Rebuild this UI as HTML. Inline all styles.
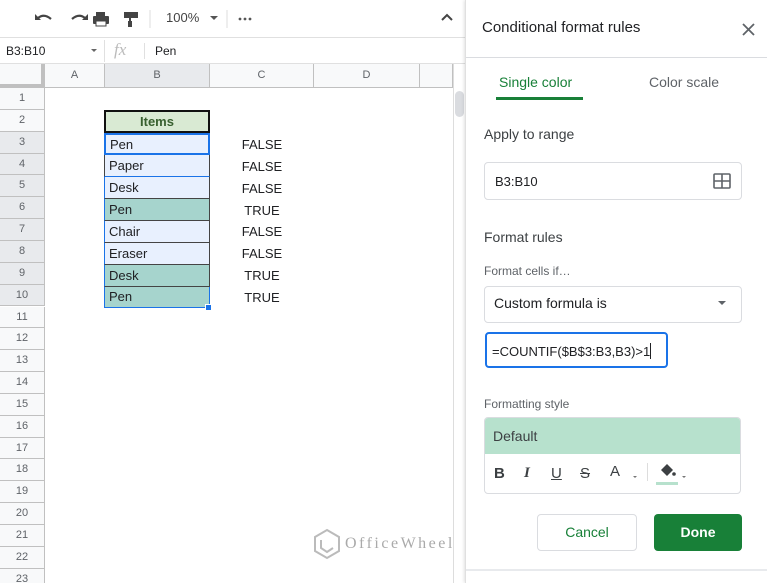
<!DOCTYPE html>
<html><head><style>
*{margin:0;padding:0;box-sizing:border-box}
html,body{width:767px;height:583px;overflow:hidden}
body{background:#fff;font-family:"Liberation Sans",Arial,sans-serif;position:relative;color:#202124}
.a{position:absolute}
.rn{position:absolute;left:0;width:45px;background:#f8f9fa;border-bottom:1px solid #c0c0c0;border-right:1px solid #c0c0c0;text-align:center;font-size:11px;color:#5f6368}
.ch{position:absolute;top:64px;height:24px;background:#f8f9fa;border-right:1px solid #c0c0c0;border-bottom:1px solid #c0c0c0;text-align:center;font-size:11px;color:#5f6368;line-height:23px}
.cell{position:absolute;left:104px;width:106px;font-size:13px;padding-left:4px;border:1px solid #444;border-top:none}
.tf{position:absolute;left:210px;width:104px;text-align:center;font-size:13px}
.lbl{position:absolute;font-size:14px;color:#3c4043}
.box{position:absolute;border:1px solid #dadce0;border-radius:4px;background:#fff}
</style></head><body>
<!-- toolbar -->
<div class="a" style="left:0;top:0;width:466px;height:38px;border-bottom:1px solid #e0e0e0"></div>
<svg class="a" style="left:30px;top:8px" width="260" height="22" viewBox="0 0 260 22">
<g fill="none" stroke="#444" stroke-width="2.2">
<path d="M8 10 Q14 5 21 11"/><path d="M42 11 Q49 5 55 10"/></g>
<path d="M5 6v6h6z" fill="#444"/><path d="M58 6v6h-6z" fill="#444"/>
<rect x="66" y="4" width="9" height="4" fill="#444"/><rect x="63" y="8" width="16" height="8" rx="1" fill="#444"/><rect x="66" y="13" width="10" height="5" fill="#fff" stroke="#444"/>
<rect x="94" y="4" width="14" height="6" fill="#444"/><rect x="99" y="10" width="2" height="3" fill="#444"/><rect x="98" y="13" width="4" height="6" fill="#444"/>
<line x1="120" y1="2" x2="120" y2="20" stroke="#ddd"/>
<path d="M180 8h8l-4 4z" fill="#555"/>
<line x1="197" y1="2" x2="197" y2="20" stroke="#ddd"/>
<circle cx="210" cy="11" r="1.4" fill="#555"/><circle cx="215" cy="11" r="1.4" fill="#555"/><circle cx="220" cy="11" r="1.4" fill="#555"/>
</svg>
<div class="a" style="left:166px;top:10px;font-size:13px;color:#444">100%</div>
<svg class="a" style="left:440px;top:12px" width="14" height="10"><path d="M2 8l5-5 5 5" fill="none" stroke="#444" stroke-width="2"/></svg>
<!-- formula bar -->
<div class="a" style="left:0;top:38px;width:466px;height:26px;border-bottom:1px solid #e0e0e0"></div>
<div class="a" style="left:6px;top:44px;font-size:12px">B3:B10</div>
<div class="a" style="left:91px;top:49px;border:3px solid transparent;border-top:3px solid #666"></div>
<div class="a" style="left:104px;top:40px;width:1px;height:22px;background:#e0e0e0"></div>
<div class="a" style="left:114px;top:40px;font-size:17px;font-style:italic;color:#bbb;font-family:'Liberation Serif',serif">fx</div>
<div class="a" style="left:144px;top:43px;width:1px;height:16px;background:#e0e0e0"></div>
<div class="a" style="left:155px;top:44px;font-size:12px">Pen</div>
<!-- headers -->
<div class="a" style="left:0;top:64px;width:45px;height:24px;background:#f8f9fa;border-right:4px solid #c0c0c0;border-bottom:4px solid #c0c0c0"></div>
<div class="ch" style="left:45px;width:60px">A</div>
<div class="ch" style="left:105px;width:105px;background:#e8eaed">B</div>
<div class="ch" style="left:210px;width:104px">C</div>
<div class="ch" style="left:314px;width:106px">D</div>
<div class="ch" style="left:420px;width:33px"></div>
<div class="a" style="left:453px;top:64px;width:13px;height:519px;background:#fff;border-left:1px solid #ddd"></div>
<div class="a" style="left:455px;top:91px;width:9px;height:26px;background:#dadce0;border-radius:5px"></div>
<div id="rows"></div>
<script>
var h='';for(var i=1;i<=23;i++){var t=88+(i-1)*21.85;h+='<div class="rn" style="top:'+t+'px;height:21.85px;line-height:21px;'+(i>=3&&i<=10?'background:#e8eaed;':'')+'">'+i+'</div>';}
document.getElementById('rows').innerHTML=h;
</script>
<div class="a" style="left:104px;top:110px;width:106px;height:23px;background:#d9ead3;border:2px solid #111;text-align:center;font-size:13px;font-weight:bold;color:#38602f;line-height:19px">Items</div>
<div class="cell" style="top:133px;height:22px;line-height:19px;background:#e8f0fe;border:2px solid #1a73e8">Pen</div>
<div class="cell" style="top:155px;height:22px;line-height:21px;background:#e8f0fe;border-color:#1a73e8 #444">Paper</div>
<div class="cell" style="top:177px;height:22px;line-height:21px;background:#e8f0fe;border-left-color:#1a73e8">Desk</div>
<div class="cell" style="top:199px;height:22px;line-height:21px;background:#a6d4cd;border-left-color:#1a73e8">Pen</div>
<div class="cell" style="top:221px;height:22px;line-height:21px;background:#e8f0fe;border-left-color:#1a73e8">Chair</div>
<div class="cell" style="top:243px;height:22px;line-height:21px;background:#e8f0fe;border-left-color:#1a73e8">Eraser</div>
<div class="cell" style="top:265px;height:22px;line-height:21px;background:#a6d4cd;border-left-color:#1a73e8">Desk</div>
<div class="cell" style="top:287px;height:21px;line-height:20px;background:#a6d4cd;border-color:#1a73e8">Pen</div>
<div class="a" style="left:205px;top:304px;width:7px;height:7px;background:#1a73e8;border:1px solid #fff"></div>
<div class="tf" style="top:137px">FALSE</div>
<div class="tf" style="top:159px">FALSE</div>
<div class="tf" style="top:181px">FALSE</div>
<div class="tf" style="top:203px">TRUE</div>
<div class="tf" style="top:224px">FALSE</div>
<div class="tf" style="top:246px">FALSE</div>
<div class="tf" style="top:268px">TRUE</div>
<div class="tf" style="top:290px">TRUE</div>
<!-- watermark -->
<svg class="a" style="left:312px;top:528px" width="30" height="32"><path d="M15 2l12 7v14l-12 7-12-7V9z" fill="none" stroke="#bbb" stroke-width="2"/><path d="M9 12v8l6 4 6-4" fill="none" stroke="#bbb" stroke-width="2"/></svg>
<div class="a" style="left:345px;top:535px;font-family:'Liberation Serif',serif;font-size:16px;letter-spacing:2.5px;color:#aaa">OfficeWheel</div>
<!-- panel -->
<div class="a" style="left:465px;top:0;width:302px;height:583px;background:#fff;border-left:1px solid #e0e0e0;box-shadow:-1px 0 3px rgba(0,0,0,.12)"></div>
<div class="a" style="left:482px;top:19px;font-size:15px;color:#202124">Conditional format rules</div>
<svg class="a" style="left:742px;top:23px" width="13" height="13"><path d="M1 1l11 11M12 1L1 12" stroke="#5f6368" stroke-width="1.8"/></svg>
<div class="a" style="left:466px;top:57px;width:301px;height:1px;background:#dadce0"></div>
<div class="a" style="left:499px;top:74px;font-size:14px;color:#188038">Single color</div>
<div class="a" style="left:496px;top:97px;width:87px;height:3px;background:#188038"></div>
<div class="a" style="left:649px;top:74px;font-size:14px;color:#5f6368">Color scale</div>
<div class="lbl" style="left:484px;top:126px;font-size:14px;color:#3c4043">Apply to range</div>
<div class="box" style="left:484px;top:162px;width:258px;height:38px"></div>
<div class="a" style="left:495px;top:174px;font-size:13px">B3:B10</div>
<svg class="a" style="left:713px;top:173px" width="18" height="16"><rect x="1" y="1" width="16" height="14" rx="1" fill="none" stroke="#5f6368" stroke-width="1.6"/><path d="M9 1v14M1 8h16" stroke="#5f6368" stroke-width="1.6"/></svg>
<div class="lbl" style="left:484px;top:229px">Format rules</div>
<div class="a" style="left:484px;top:264px;font-size:12px;color:#5f6368">Format cells if…</div>
<div class="box" style="left:484px;top:286px;width:258px;height:37px"></div>
<div class="a" style="left:494px;top:295px;font-size:14px">Custom formula is</div>
<div class="a" style="left:718px;top:301px;border:4px solid transparent;border-top:4px solid #5f6368"></div>
<div class="box" style="left:485px;top:332px;width:183px;height:36px;border:2px solid #1a73e8"></div>
<div class="a" style="left:492px;top:343px;font-size:13px">=COUNTIF($B$3:B3,B3)&gt;1<span style="display:inline-block;width:1px;height:16px;background:#202124;vertical-align:-3px"></span></div>
<div class="a" style="left:484px;top:397px;font-size:12px;color:#5f6368">Formatting style</div>
<div class="box" style="left:484px;top:417px;width:257px;height:77px;overflow:hidden"><div style="height:36px;background:#b7e1cd;padding:10px 8px;font-size:14px;color:#3c4043">Default</div></div>
<div class="a" style="left:494px;top:465px;font-size:15px;font-weight:bold;color:#3c4043">B</div>
<div class="a" style="left:524px;top:465px;font-size:15px;font-style:italic;color:#3c4043;font-family:'Liberation Serif',serif;font-weight:bold">I</div>
<div class="a" style="left:551px;top:465px;font-size:15px;text-decoration:underline;color:#3c4043">U</div>
<div class="a" style="left:580px;top:465px;font-size:15px;text-decoration:line-through;color:#3c4043">S</div>
<div class="a" style="left:610px;top:463px;font-size:15px;color:#3c4043">A</div>
<div class="a" style="left:633px;top:476px;border:2px solid transparent;border-top:2px solid #777"></div>
<div class="a" style="left:647px;top:463px;width:1px;height:18px;background:#ddd"></div>
<svg class="a" style="left:658px;top:463px" width="20" height="14"><path d="M3 7l6-6 6 6-6 6z" fill="#3c4043"/><circle cx="16" cy="11" r="1.8" fill="#3c4043"/></svg>
<div class="a" style="left:656px;top:482px;width:22px;height:3px;background:#b7e1cd"></div>
<div class="a" style="left:682px;top:476px;border:2px solid transparent;border-top:2px solid #777"></div>
<div class="box" style="left:537px;top:514px;width:100px;height:37px;text-align:center;line-height:35px;font-size:14px;color:#188038">Cancel</div>
<div class="a" style="left:654px;top:514px;width:88px;height:37px;background:#188038;border-radius:4px;text-align:center;line-height:37px;font-size:14px;font-weight:bold;color:#fff">Done</div>
<div class="a" style="left:466px;top:569px;width:301px;height:2px;background:#e8eaed"></div>
</body></html>
